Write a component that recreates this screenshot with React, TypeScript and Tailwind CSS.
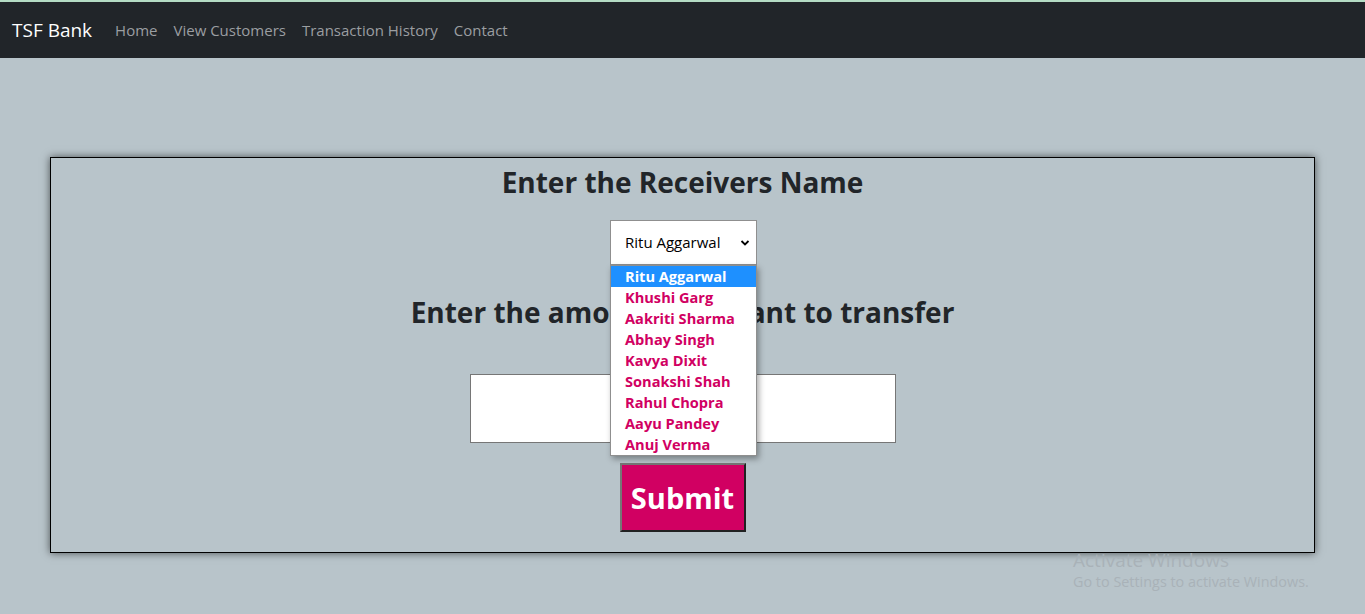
import React from 'react';

const names = [
  'Ritu Aggarwal',
  'Khushi Garg',
  'Aakriti Sharma',
  'Abhay Singh',
  'Kavya Dixit',
  'Sonakshi Shah',
  'Rahul Chopra',
  'Aayu Pandey',
  'Anuj Verma',
];

const navLinks = ['Home', 'View Customers', 'Transaction History', 'Contact'];

const App: React.FC = () => {
  return (
    <div className="min-h-screen bg-[#b8c4ca] font-['Open_Sans',sans-serif] relative overflow-hidden">
      <div className="h-[2px] bg-[#b4dcc4]" />

      {/* Navbar */}
      <nav className="h-[56px] bg-[#212529] flex items-center px-3">
        <span className="text-white text-[19px] mr-[23px]">TSF Bank</span>
        <ul className="flex gap-4">
          {navLinks.map((l) => (
            <li key={l} className="text-[15px] text-[#9b9ea1]">
              {l}
            </li>
          ))}
        </ul>
      </nav>

      {/* Card */}
      <div className="mx-[50px] mt-[99px] h-[396px] border border-black shadow-[0_0_8px_rgba(0,0,0,0.6)] flex flex-col items-center">
        <h2 className="mt-[6px] text-[28px] font-bold text-[#212529] leading-[36px]">Enter the Receivers Name</h2>

        <div className="relative mt-[20px] ml-[2px]">
          <div className="w-[147px] h-[45px] bg-white border border-[#8f8f8f] flex items-center justify-between pl-[14px] pr-[5px] text-[15px] text-black">
            <span>Ritu Aggarwal</span>
            <svg width="10" height="8" viewBox="0 0 10 8" className="mr-[1px]">
              <path d="M1.5 2 L5 5.5 L8.5 2" fill="none" stroke="#000" strokeWidth="1.8" />
            </svg>
          </div>

          {/* open dropdown */}
          <ul className="absolute left-0 top-[45px] w-[147px] bg-white border border-[#8f8f8f] shadow-[2px_3px_6px_rgba(0,0,0,0.35)] z-10">
            {names.map((n, i) => (
              <li
                key={n}
                className={
                  i === 0
                    ? 'h-[21px] leading-[21px] pl-[14px] text-[14.6px] font-bold bg-[#1e90ff] text-white'
                    : 'h-[21px] leading-[21px] pl-[14px] text-[14.6px] font-bold text-[#d10062]'
                }
              >
                {n}
              </li>
            ))}
          </ul>
        </div>

        <h2 className="mt-[29px] text-[28px] font-bold text-[#212529] leading-[36px]">
          Enter the amount you want to transfer
        </h2>

        <input className="mt-[44px] w-[426px] h-[69px] bg-white border border-[#767676] outline-none" />

        <button className="mt-[20px] w-[126px] h-[69px] bg-[#d10062] text-white text-[29px] font-bold border-2 border-t-[#767676] border-l-[#767676] border-b-[#212121] border-r-[#212121]">
          Submit
        </button>
      </div>

      {/* Windows watermark */}
      <div className="absolute left-[1073px] top-[549px] text-[#a9b2b8] leading-tight">
        <div className="text-[19px]">Activate Windows</div>
        <div className="text-[14.4px]">Go to Settings to activate Windows.</div>
      </div>
    </div>
  );
};

export default App;
